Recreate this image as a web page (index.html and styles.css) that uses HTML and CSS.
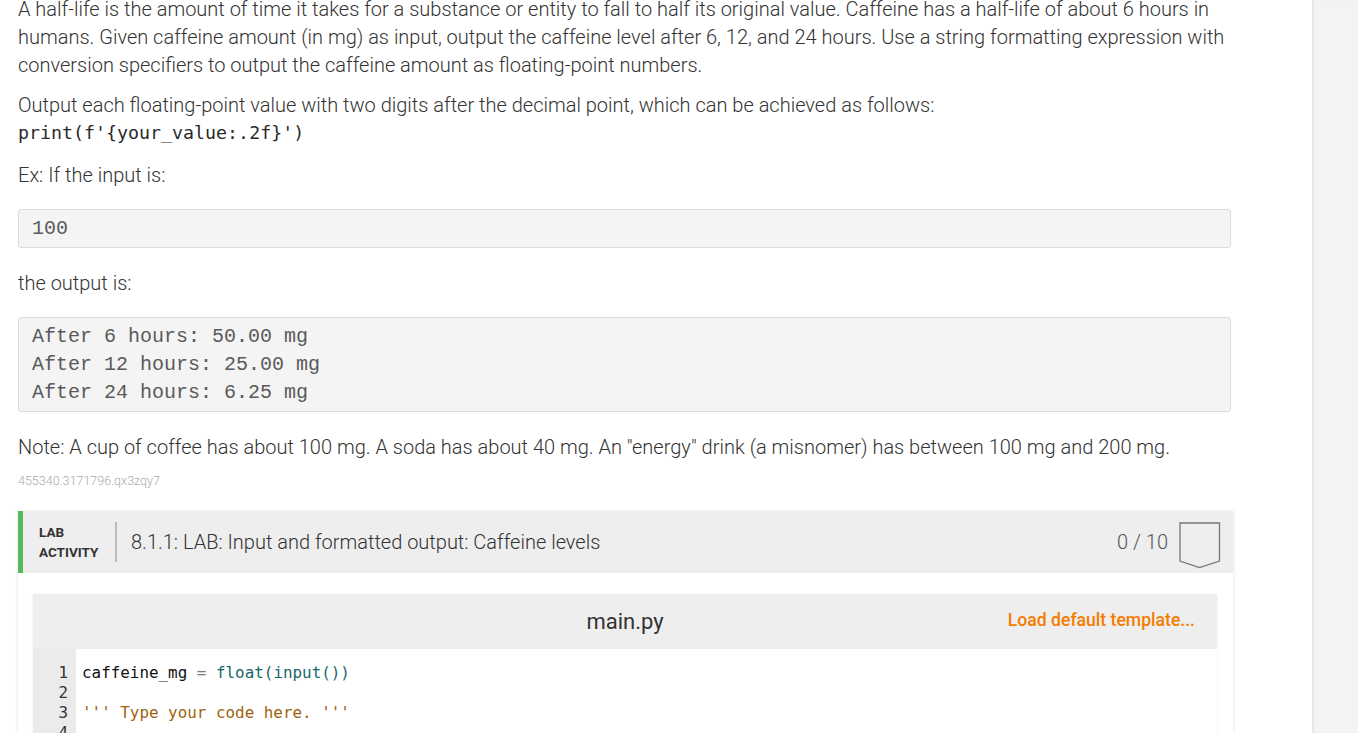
FILE: index.html
```html
<!DOCTYPE html>
<html>
<head>
<meta charset="utf-8">
<link rel="stylesheet" href="styles.css">
</head>
<body>
<div class="page">
  <main class="content">
    <p class="para first">A half-life is the amount of time it takes for a substance or entity to fall to half its original value. Caffeine has a half-life of about 6 hours in humans. Given caffeine amount (in mg) as input, output the caffeine level after 6, 12, and 24 hours. Use a string formatting expression with conversion specifiers to output the caffeine amount as floating-point numbers.</p>
    <p class="para tight">Output each floating-point value with two digits after the decimal point, which can be achieved as follows:</p>
    <div class="inline-code">print(f'{your_value:.2f}')</div>
    <p class="para ex">Ex: If the input is:</p>
    <pre class="sample">100</pre>
    <p class="para ex">the output is:</p>
    <pre class="sample">After 6 hours: 50.00 mg
After 12 hours: 25.00 mg
After 24 hours: 6.25 mg</pre>
    <p class="para note">Note: A cup of coffee has about 100 mg. A soda has about 40 mg. An "energy" drink (a misnomer) has between 100 mg and 200 mg.</p>
    <div class="resource-id">455340.3171796.qx3zqy7</div>

    <section class="lab">
      <header class="lab-header">
        <div class="lab-label">LAB<br>ACTIVITY</div>
        <div class="lab-divider"></div>
        <div class="lab-title">8.1.1: LAB: Input and formatted output: Caffeine levels</div>
        <div class="lab-score">0 / 10</div>
        <svg class="lab-badge" width="42" height="47" viewBox="0 0 42 47">
          <path d="M1 1 H40.5 V39 L20.5 45.5 L1 39 Z" fill="none" stroke="#777" stroke-width="1.3"/>
        </svg>
      </header>
      <div class="lab-body">
        <div class="editor">
          <div class="editor-head">
            <span class="editor-file">main.py</span>
            <span class="editor-load">Load default template...</span>
          </div>
          <div class="editor-code">
            <div class="gutter">
              <div>1</div>
              <div>2</div>
              <div>3</div>
              <div>4</div>
            </div>
            <div class="lines">
              <div class="ln"><span class="c-var">caffeine_mg</span> <span class="c-op">=</span> <span class="c-fn">float(input())</span></div>
              <div class="ln">&nbsp;</div>
              <div class="ln"><span class="c-str">''' Type your code here. '''</span></div>
              <div class="ln">&nbsp;</div>
            </div>
          </div>
        </div>
      </div>
    </section>
  </main>
  <aside class="side"></aside>
</div>
</body>
</html>
```

FILE: styles.css
```css
html, body {
  margin: 0;
  padding: 0;
  height: 100%;
  overflow: hidden;
  background: #fff;
}

.page {
  display: flex;
  height: 733px;
}

.content {
  width: 1213px;
  padding-left: 18px;
  padding-right: 81px;
  font-family: Roboto, "Noto Sans", sans-serif;
  font-weight: 300;
  font-size: 20px;
  color: #333;
  flex: none;
}

.side {
  flex: 1;
  background: #f3f3f3;
  border-left: 1px solid #e4e4e4;
  box-shadow: inset 1px 0 2px rgba(0,0,0,0.04);
}

.para {
  margin: 0 0 12px;
  line-height: 28px;
}

.para.first {
  margin-top: -5px;
}

.para.tight {
  margin-bottom: 0;
}

.para.ex {
  margin-bottom: 20px;
}

.inline-code {
  font-family: "DejaVu Sans Mono", monospace;
  font-size: 18.3px;
  font-weight: 400;
  line-height: 28px;
  color: #2a2a2a;
  margin-bottom: 14px;
}

.sample {
  margin: 0 0 21px;
  padding: 5px 13px 4px;
  background: #f4f4f4;
  border: 1px solid #dcdcdc;
  border-radius: 3px;
  font-family: "Liberation Mono", "Courier New", monospace;
  font-size: 20px;
  line-height: 28px;
  color: #5a5a5a;
}

.para.note {
  margin-top: 21px;
  margin-bottom: 12px;
}

.resource-id {
  font-size: 12.5px;
  line-height: 16px;
  color: #aaa;
  margin-bottom: 22px;
}

.lab {
  width: 1215px;
  background: #fff;
  box-shadow: 0 1px 4px rgba(0,0,0,0.12);
}

.lab-header {
  display: flex;
  align-items: center;
  height: 62px;
  background: #eeeeee;
  border-left: 5px solid #5cb85c;
  padding-left: 16px;
  padding-right: 12px;
  box-sizing: border-box;
}

.lab-label {
  font-weight: 700;
  font-size: 13.5px;
  line-height: 20px;
  color: #333;
  width: 60px;
}

.lab-divider {
  width: 2px;
  height: 40px;
  background: #bdbdbd;
  margin-left: 16px;
  margin-right: 14px;
}

.lab-title {
  flex: 1;
  font-size: 20px;
  color: #333;
}

.lab-score {
  font-size: 20px;
  color: #555;
  margin-right: 11px;
}

.lab-badge {
  display: block;
  margin-top: 6px;
}

.lab-body {
  padding: 21px 16px 0 15px;
}

.editor {
  box-shadow: 0 1px 3px rgba(0,0,0,0.08);
}

.editor-head {
  height: 55px;
  background: #eeeeee;
  display: flex;
  align-items: center;
  justify-content: center;
  position: relative;
}

.editor-file {
  font-family: Roboto, sans-serif;
  font-weight: 400;
  font-size: 22px;
  color: #333;
}

.editor-load {
  position: absolute;
  right: 22px;
  top: 16px;
  font-family: Roboto, sans-serif;
  font-weight: 500;
  font-size: 17.6px;
  color: #f57c00;
}

.editor-code {
  display: flex;
  background: #fff;
  font-family: "DejaVu Sans Mono", monospace;
  font-size: 15.9px;
  line-height: 20px;
  height: 90px;
}

.gutter {
  width: 43px;
  background: #ebebeb;
  padding-top: 14px;
  padding-right: 8px;
  box-sizing: border-box;
  text-align: right;
  color: #333;
}

.lines {
  padding-top: 14px;
  padding-left: 6px;
  color: #000;
}

.ln {
  white-space: pre;
}

.c-var { color: #111; }
.c-op { color: #777; }
.c-fn { color: #17686a; }
.c-str { color: #a0620e; }
```
